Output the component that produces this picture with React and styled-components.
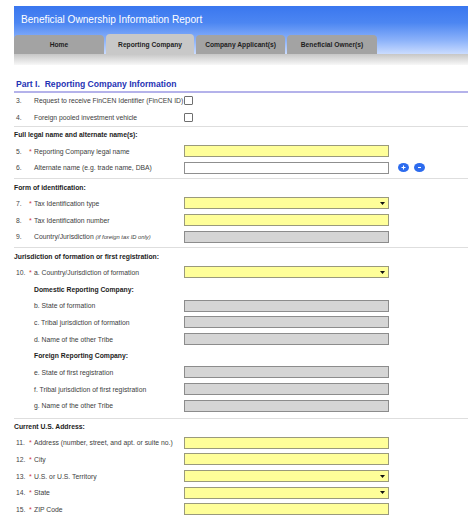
import React from "react";
import styled, { createGlobalStyle } from "styled-components";

const GlobalStyle = createGlobalStyle`
  html, body { margin: 0; padding: 0; background: #fff; }
  body { font-family: "Liberation Sans", Arial, sans-serif; color: #3d3d3d; }
`;

const Page = styled.div`
  width: 474px;
  box-sizing: border-box;
  padding: 6px 6px 0 14px;
`;

const Banner = styled.header`
  height: 48px;
  display: flex;
  flex-direction: column;
  justify-content: space-between;
  background: linear-gradient(to bottom, #3a77ef 0%, #4c86f2 35%, #8db3fa 72%, #cadcff 100%);
`;

const Title = styled.h1`
  margin: 0;
  padding: 8px 0 0 7px;
  font-size: 10.1px;
  line-height: 12px;
  font-weight: normal;
  color: #fff;
`;

const TabBar = styled.nav`
  display: flex;
  align-items: flex-end;
  gap: 2px;
`;

const Tab = styled.div`
  width: ${(p) => p.$w}px;
  height: ${(p) => (p.$active ? 20 : 19)}px;
  display: flex;
  align-items: center;
  justify-content: center;
  border-radius: 4px 4px 0 0;
  background: ${(p) => (p.$active ? "#c8c8c8" : "#a3a3a3")};
  font-size: 6.7px;
  font-weight: bold;
  color: #1e1e1e;
`;

const Shade = styled.div`
  height: 11px;
  background: linear-gradient(to bottom, #c6c6c6, #f8f8f8);
`;

const PartTitle = styled.h2`
  margin: 13.5px 0 0;
  padding: 0 0 2px 2px;
  border-bottom: 2px solid #b4b2ea;
  font-size: 8.6px;
  line-height: 10px;
  font-weight: bold;
  color: #1f33b5;
`;

const GroupHeading = styled.h3`
  margin: ${(p) => p.$gap}px 0 0;
  padding: 3.5px 0 2.5px;
  border-top: 1px solid #dedede;
  font-size: 6.8px;
  line-height: 10px;
  font-weight: bold;
  color: #1c1c1c;
`;

const Row = styled.div`
  display: grid;
  grid-template-columns: 13px 5px 150px 205px auto;
  align-items: center;
  height: 16.666px;
  padding-left: 2px;
  font-size: 6.8px;
  white-space: nowrap;
`;

const Num = styled.span`
  color: #444;
`;

const Star = styled.span`
  color: #d03a3a;
  font-size: 7px;
`;

const Label = styled.span`
  color: ${(p) => (p.$strong ? "#1c1c1c" : "#3d3d3d")};
  font-weight: ${(p) => (p.$strong ? "bold" : "normal")};
`;

const Hint = styled.i`
  font-size: 5.8px;
`;

const tones = {
  yellow: { bg: "#ffff99", line: "#9a9a7c" },
  gray: { bg: "#d5d5d5", line: "#8c8c8c" },
  white: { bg: "#ffffff", line: "#8f8f8f" },
};

const Field = styled.div`
  height: 12px;
  box-sizing: border-box;
  display: flex;
  align-items: center;
  justify-content: flex-end;
  padding-right: 3px;
  border: 1px solid ${(p) => tones[p.$tone].line};
  background: ${(p) => tones[p.$tone].bg};
`;

const Check = styled.span`
  width: 9px;
  height: 9px;
  box-sizing: border-box;
  border: 1px solid #6f6f6f;
  border-radius: 1px;
  background: #fff;
`;

const Buttons = styled.div`
  display: flex;
  gap: 5px;
  margin-left: 9.3px;
`;

const RoundButton = styled.span`
  width: 11px;
  height: 9px;
  border-radius: 50%;
  background: #2c6bee;
  display: flex;
  align-items: center;
  justify-content: center;
`;

const Glyph = ({ plus }) => (
  <svg width="5" height="5" viewBox="0 0 5 5">
    <path d={plus ? "M2.5 0.5V4.5M0.5 2.5H4.5" : "M1 2.5H4"} stroke="#fff" strokeWidth="1.1" />
  </svg>
);

const Arrow = () => (
  <svg width="5" height="3" viewBox="0 0 5 3">
    <path d="M0 0H5L2.5 3Z" fill="#111" />
  </svg>
);

const FormRow = ({ num, req, label, tone, select, strong, check, extra }) => (
  <Row>
    <Num>{num}</Num>
    <Star>{req ? "*" : ""}</Star>
    <Label $strong={strong}>{label}</Label>
    {check ? <Check /> : tone ? <Field $tone={tone}>{select && <Arrow />}</Field> : <span />}
    {extra}
  </Row>
);

export default function App() {
  return (
    <Page>
      <GlobalStyle />
      <Banner>
        <Title>Beneficial Ownership Information Report</Title>
        <TabBar>
          <Tab $w={90}>Home</Tab>
          <Tab $w={88} $active>Reporting Company</Tab>
          <Tab $w={89}>Company Applicant(s)</Tab>
          <Tab $w={90}>Beneficial Owner(s)</Tab>
        </TabBar>
      </Banner>
      <Shade />

      <PartTitle>Part I.&nbsp; Reporting Company Information</PartTitle>

      <FormRow num="3." label="Request to receive FinCEN Identifier (FinCEN ID)" check />
      <FormRow num="4." label="Foreign pooled investment vehicle" check />

      <GroupHeading $gap={0}>Full legal name and alternate name(s):</GroupHeading>
      <FormRow num="5." req label="Reporting Company legal name" tone="yellow" />
      <FormRow
        num="6."
        label="Alternate name (e.g. trade name, DBA)"
        tone="white"
        extra={
          <Buttons>
            <RoundButton title="Add">
              <Glyph plus />
            </RoundButton>
            <RoundButton title="Remove">
              <Glyph />
            </RoundButton>
          </Buttons>
        }
      />

      <GroupHeading $gap={2}>Form of identification:</GroupHeading>
      <FormRow num="7." req label="Tax Identification type" tone="yellow" select />
      <FormRow num="8." req label="Tax Identification number" tone="yellow" />
      <FormRow
        num="9."
        label={
          <>
            Country/Jurisdiction <Hint>(if foreign tax ID only)</Hint>
          </>
        }
        tone="gray"
      />

      <GroupHeading $gap={2}>Jurisdiction of formation or first registration:</GroupHeading>
      <FormRow num="10." req label="a. Country/Jurisdiction of formation" tone="yellow" select />
      <FormRow label="Domestic Reporting Company:" strong />
      <FormRow label="b. State of formation" tone="gray" />
      <FormRow label="c. Tribal jurisdiction of formation" tone="gray" />
      <FormRow label="d. Name of the other Tribe" tone="gray" />
      <FormRow label="Foreign Reporting Company:" strong />
      <FormRow label="e. State of first registration" tone="gray" />
      <FormRow label="f. Tribal jurisdiction of first registration" tone="gray" />
      <FormRow label="g. Name of the other Tribe" tone="gray" />

      <GroupHeading $gap={3.5}>Current U.S. Address:</GroupHeading>
      <FormRow num="11." req label="Address (number, street, and apt. or suite no.)" tone="yellow" />
      <FormRow num="12." req label="City" tone="yellow" />
      <FormRow num="13." req label="U.S. or U.S. Territory" tone="yellow" select />
      <FormRow num="14." req label="State" tone="yellow" select />
      <FormRow num="15." req label="ZIP Code" tone="yellow" />
    </Page>
  );
}
